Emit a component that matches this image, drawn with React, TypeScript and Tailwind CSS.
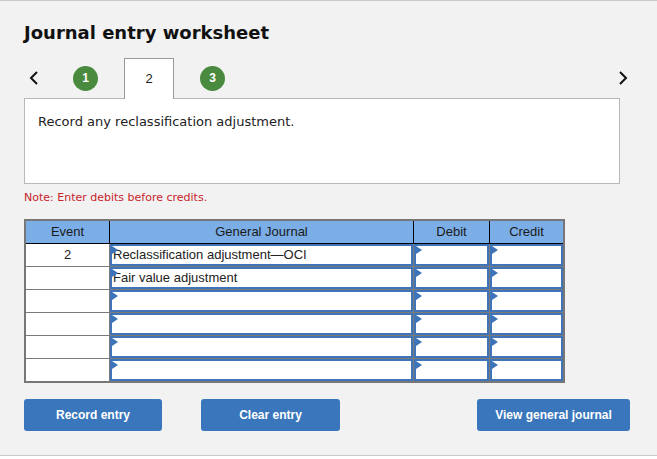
import React from "react";

const Marker = () => (
  <svg className="absolute left-0 top-0" width="6" height="8" viewBox="0 0 6 8">
    <polygon points="0,0 6,4 0,8" fill="#3d74b9" />
  </svg>
);

const InputCell = ({ w, text, last }: { w: string; text?: string; last?: boolean }) => (
  <div className={`${w} h-full ${last ? "" : "border-r border-[#7a7a7a]"} bg-white`}>
    <div className="relative h-full border-2 border-[#3f74b8] bg-white pl-[1px] text-[13px] leading-[17px] text-[#222]" style={{ fontFamily: '"Liberation Sans", Arial, sans-serif' }}>
      <Marker />
      {text}
    </div>
  </div>
);

const rows: { ev: string; gj: string }[] = [
  { ev: "2", gj: "Reclassification adjustment\u2014OCI" },
  { ev: "", gj: "Fair value adjustment" },
  { ev: "", gj: "" },
  { ev: "", gj: "" },
  { ev: "", gj: "" },
  { ev: "", gj: "" },
];

export default function App() {
  const arial = { fontFamily: '"Liberation Sans", Arial, sans-serif' };
  const verdana = { fontFamily: '"DejaVu Sans", Verdana, sans-serif' };
  return (
    <div className="w-[657px] h-[456px] bg-[#f2f2f2] border-t border-b border-[#c8c8c8] pl-[24px] pt-[20px]">
      <h1 className="text-[18px] leading-[24px] font-bold text-[#111]" style={verdana}>
        Journal entry worksheet
      </h1>

      <div className="mt-[13px] flex items-end h-[40px] w-[596px] relative z-10">
        <div className="flex h-full items-center w-[100px]">
          <svg width="10" height="16" viewBox="0 0 10 16" className="ml-[5px]">
            <polyline points="8,2 2,8 8,14" fill="none" stroke="#111" strokeWidth="2" />
          </svg>
          <div className="ml-[34px] w-[25px] h-[25px] rounded-full bg-[#4a8a3e] text-white text-[12px] font-bold flex items-center justify-center" style={arial}>1</div>
        </div>
        <div className="w-[50px] h-[41px] -mb-px bg-white border border-b-0 border-[#9a9a9a] flex items-center justify-center text-[13px] text-[#222]" style={arial}>
          2
        </div>
        <div className="flex h-full items-center">
          <div className="ml-[26px] w-[25px] h-[25px] rounded-full bg-[#4a8a3e] text-white text-[12px] font-bold flex items-center justify-center" style={arial}>3</div>
        </div>
        <div className="flex h-full items-center ml-auto mr-[-8px]">
          <svg width="10" height="16" viewBox="0 0 10 16">
            <polyline points="2,2 8,8 2,14" fill="none" stroke="#111" strokeWidth="2" />
          </svg>
        </div>
      </div>

      <div className="w-[596px] h-[86px] bg-white border border-[#b8b8b8] pl-[13px] pt-[15px] text-[13px] leading-[16px] text-[#222]" style={verdana}>
        Record any reclassification adjustment.
      </div>

      <div className="mt-[7px] text-[11px] leading-[14px] text-[#c8242b]" style={verdana}>
        Note: Enter debits before credits.
      </div>

      <div className="mt-[14px] w-[541px] border-2 border-[#777] bg-white" style={arial}>
        <div className="flex h-[23px] bg-[#7badE6] border-b border-black text-[13px] text-[#1a1a1a] leading-[22px]">
          <div className="w-[84px] border-r border-black text-center">Event</div>
          <div className="w-[304px] border-r border-black text-center">General Journal</div>
          <div className="w-[76px] border-r border-black text-center">Debit</div>
          <div className="flex-1 text-center">Credit</div>
        </div>
        {rows.map((r, i) => (
          <div key={i} className={`flex ${i < rows.length - 1 ? "h-[23px] border-b border-[#7a7a7a]" : "h-[22px]"}`}>
            <div className="w-[84px] border-r border-[#7a7a7a] text-center text-[13px] leading-[21px] text-[#222]">{r.ev}</div>
            <InputCell w="w-[304px]" text={r.gj} />
            <InputCell w="w-[76px]" />
            <InputCell w="flex-1" last />
          </div>
        ))}
      </div>

      <div className="mt-[16px] flex w-[606px] text-[12px] font-bold text-white" style={arial}>
        <button className="w-[138px] h-[32px] rounded-[3px] bg-[#3a76bb]">Record entry</button>
        <button className="ml-[39px] w-[139px] h-[32px] rounded-[3px] bg-[#3a76bb]">Clear entry</button>
        <button className="ml-auto w-[153px] h-[32px] rounded-[3px] bg-[#3a76bb]">View general journal</button>
      </div>
    </div>
  );
}
